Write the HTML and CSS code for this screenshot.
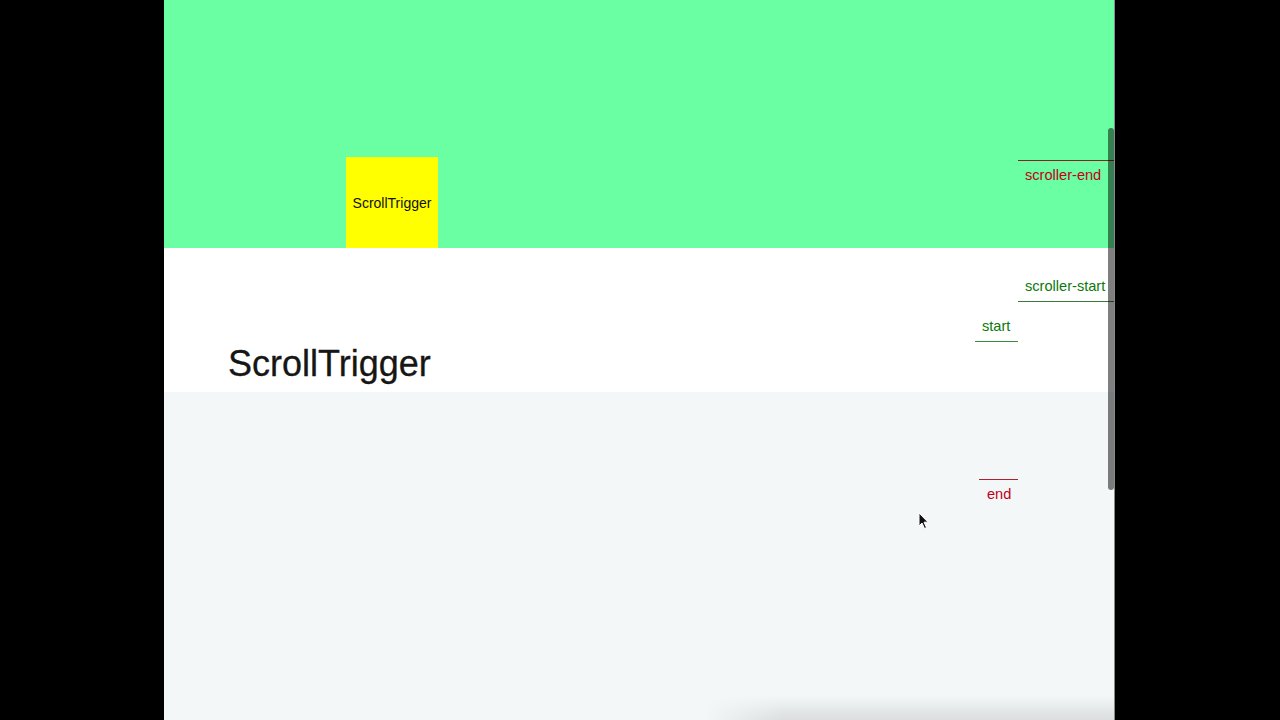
FILE: index.html
```html
<!DOCTYPE html>
<html lang="en">
<head>
    <meta charset="UTF-8">
    <meta name="viewport" content="width=device-width, initial-scale=1.0">
    <title>ScrollTrigger</title>
    <link rel="stylesheet" href="styles.css">
</head>
<body>
    <div class="frame">
        <section class="hero">
            <div class="box">ScrollTrigger</div>
        </section>
        <section class="intro">
            <h1>ScrollTrigger</h1>
        </section>
        <section class="content"></section>

        <!-- debug markers -->
        <div class="marker marker-end scroller-end">scroller-end</div>
        <div class="marker marker-start scroller-start">scroller-start</div>
        <div class="marker marker-start trigger-start">start</div>
        <div class="marker marker-end trigger-end">end</div>

        <div class="scrollbar"></div>
        <div class="bottom-shadow"></div>

        <svg class="cursor" width="12" height="18" viewBox="0 0 12 18">
            <path d="M1 1 L1 14 L4 11 L6.5 16.5 L8.5 15.6 L6 10.2 L10 10.2 Z" fill="#111" stroke="#fff" stroke-width="1"/>
        </svg>
    </div>
</body>
</html>
```
FILE: styles.css
```css
body {
    margin: 0;
    background-color: #000;
    font-family: 'Liberation Sans', Arial, sans-serif;
    overflow: hidden;
}

.frame {
    position: relative;
    width: 950px;
    height: 720px;
    margin-left: 164px;
    border-right: 1px solid #8a8a8a;
    display: flex;
    flex-direction: column;
    overflow: hidden;
    background-color: #f4f7f8;
}

.hero {
    height: 248px;
    background-color: #6affa3;
    display: flex;
    align-items: flex-end;
    padding-left: 182px;
}

.box {
    width: 92px;
    height: 91px;
    background-color: #ffff00;
    display: flex;
    align-items: center;
    justify-content: center;
    font-size: 14px;
    color: #111;
}

.intro {
    height: 144px;
    background-color: #fff;
    padding-left: 64px;
    box-sizing: border-box;
    padding-top: 98px;
}

.intro h1 {
    margin: 0;
    font-size: 36px;
    line-height: 36px;
    font-weight: normal;
    color: #161616;
    -webkit-text-stroke: 0.3px #161616;
}

.content {
    flex: 1;
}

/* markers */
.marker {
    position: absolute;
    font-size: 14.6px;
    line-height: 16px;
    white-space: nowrap;
    box-sizing: border-box;
}

.marker-start {
    color: #0a7a0a;
    border-bottom: 1px solid #3c8a3c;
    padding: 0 7px 7px;
}

.marker-end {
    color: #c00018;
    border-top: 1px solid #b02030;
    padding: 6px 7px 0;
}

.scroller-end {
    left: 854px;
    top: 160px;
    width: 96px;
    border-top-color: #8a2020;
}

.scroller-start {
    left: 854px;
    top: 278px;
    width: 96px;
    border-bottom-color: #3c7a3c;
}

.trigger-start {
    left: 811px;
    top: 318px;
    width: 43px;
}

.trigger-end {
    left: 815px;
    top: 479px;
    width: 39px;
    padding-left: 8px;
}

.scrollbar {
    position: absolute;
    left: 944px;
    top: 128px;
    width: 6px;
    height: 362px;
    border-radius: 3px;
    background-color: rgba(0, 0, 0, 0.5);
}

.bottom-shadow {
    position: absolute;
    left: 540px;
    right: 0;
    bottom: 0;
    height: 24px;
    background: linear-gradient(to bottom, rgba(0, 0, 0, 0), rgba(0, 0, 0, 0.1));
    -webkit-mask-image: linear-gradient(to right, transparent, #000 80px);
    mask-image: linear-gradient(to right, transparent, #000 80px);
}

.cursor {
    position: absolute;
    left: 754px;
    top: 512px;
}
```
